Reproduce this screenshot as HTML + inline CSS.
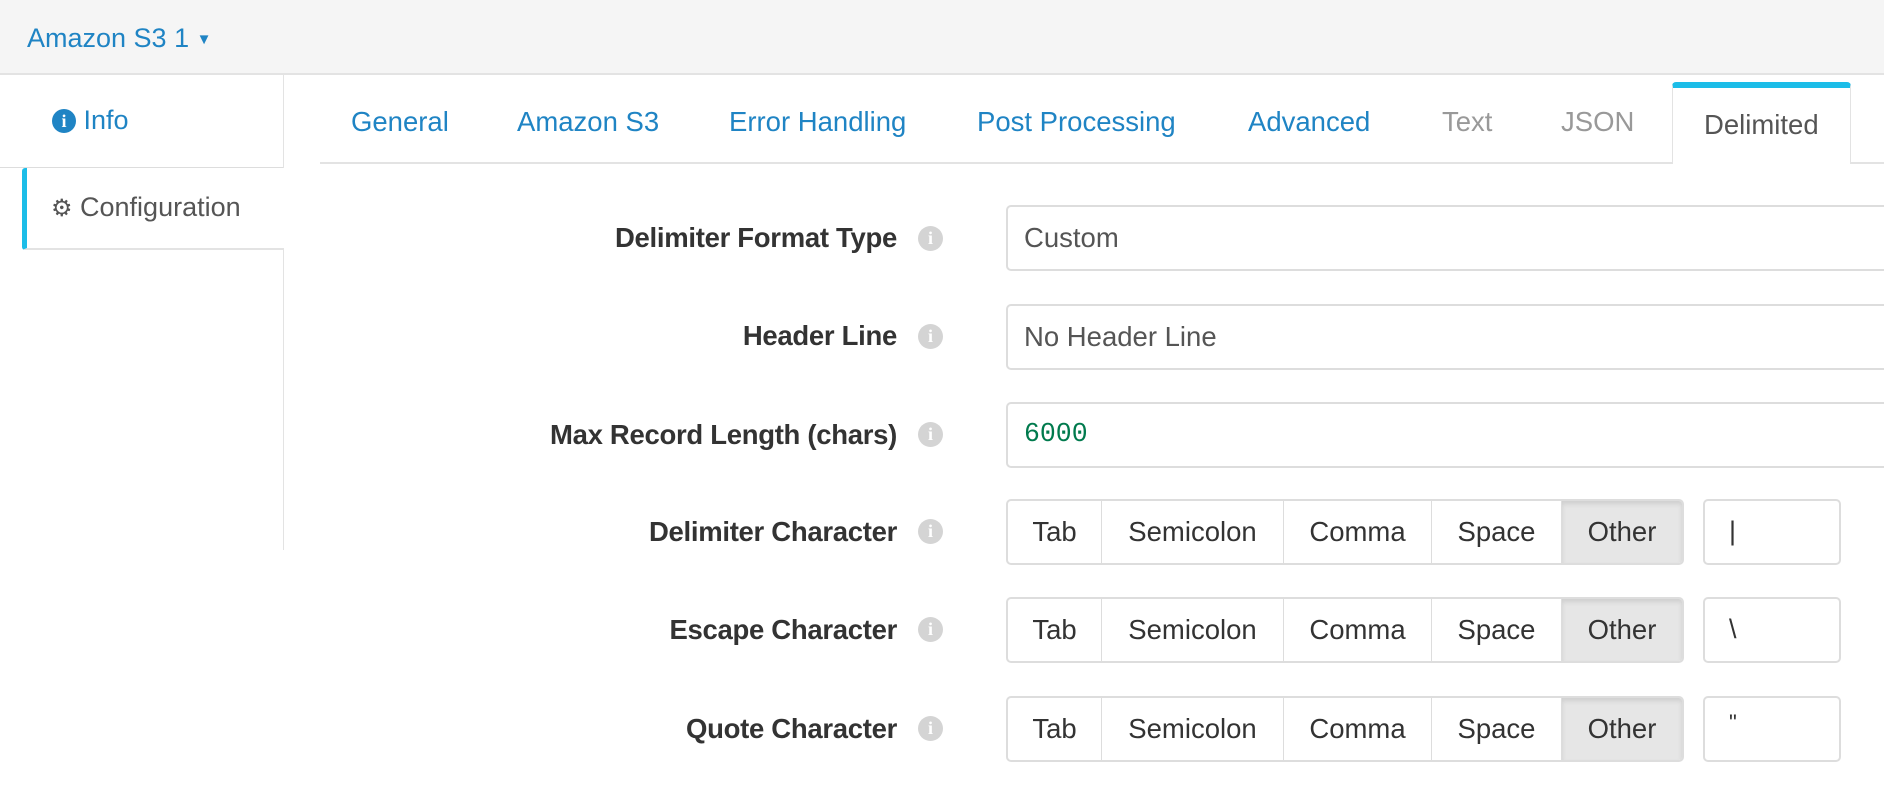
<!DOCTYPE html>
<html><head><meta charset="utf-8"><style>
*{box-sizing:border-box;margin:0;padding:0}
body{width:1884px;height:788px;overflow:hidden;background:#fff;font-family:"Liberation Sans",Arial,sans-serif;position:relative;color:#333}
.top{position:absolute;left:0;top:0;width:1884px;height:75px;background:#f5f5f5;border-bottom:2px solid #e3e3e3}
.top span{position:absolute;left:27px;top:23px;font-size:27px;color:#1f84c4}
.side{position:absolute;left:0;top:75px;width:284px;height:475px;border-right:1px solid #e3e3e3}
.info{position:absolute;left:0;top:0;width:283px;height:93px;border-bottom:1px solid #ddd;font-size:27px;color:#1f84c4;padding:30px 0 0 52px}
.conf{position:absolute;left:22px;top:93px;width:262px;height:82px;background:#fff;border-left:5px solid #1cbde8;border-bottom:2px solid #e3e3e3;font-size:27px;color:#555;padding:24px 0 0 24px;border-radius:3px 0 0 3px}
.tabs{position:absolute;left:320px;top:162px;width:1564px;border-top:2px solid #e3e3e3}
.tab{position:absolute;top:106px;font-size:27.5px;color:#1f84c4}
.act{position:absolute;left:1672px;top:82px;width:179px;height:82px;background:#fff;border:1px solid #e3e3e3;border-bottom:none;border-top:6px solid #1cbde8;border-radius:4px 4px 0 0;font-size:27.5px;color:#555;padding:21px 0 0 31px}
.lbl{position:absolute;right:987px;font-size:27.5px;font-weight:bold;color:#333;text-align:right;white-space:nowrap;letter-spacing:-0.3px}
.ic{position:absolute;left:918px;width:25px;height:25px;border-radius:50%;background:#d4d4d4;color:#fff;font:bold 18px "Liberation Serif",serif;text-align:center;line-height:25px}
.inp{position:absolute;left:1006px;width:900px;height:66px;border:2px solid #ddd;border-radius:5px;font-size:27.5px;color:#555;padding:15px 0 0 16px}
.grp{position:absolute;left:1006px;height:66px;display:flex;border:2px solid #ddd;border-radius:5px;overflow:hidden}
.grp div{height:100%;border-right:1px solid #ddd;font-size:27.5px;color:#333;text-align:center;line-height:62px}
.grp div:last-child{border-right:none;background:#e6e6e6;box-shadow:inset 0 3px 5px rgba(0,0,0,.1)}
.sm{position:absolute;left:1703px;width:138px;height:66px;border:2px solid #ddd;border-radius:5px;font-size:27px;padding:15px 0 0 24px}
</style></head><body>
<div class="top"><span>Amazon S3 1 <span style="position:static;font-size:15px;vertical-align:3px">▼</span></span></div>
<div class="side">
<div class="info"><span style="display:inline-block;width:24px;height:24px;border-radius:50%;background:#1f84c4;color:#fff;font:bold 18px 'Liberation Serif',serif;text-align:center;line-height:24px;vertical-align:2px">i</span> Info</div>
<div class="conf"><span style="color:#555;font-family:'DejaVu Sans';font-size:24px">⚙</span> Configuration</div>
</div>
<div class="tabs"></div>
<span class="tab" style="left:351px">General</span>
<span class="tab" style="left:517px">Amazon S3</span>
<span class="tab" style="left:729px">Error Handling</span>
<span class="tab" style="left:977px">Post Processing</span>
<span class="tab" style="left:1248px">Advanced</span>
<span class="tab" style="left:1442px;color:#999">Text</span>
<span class="tab" style="left:1561px;color:#999">JSON</span>
<div class="act">Delimited</div>

<div class="lbl" style="top:222px">Delimiter Format Type</div><div class="ic" style="top:226px">i</div>
<div class="inp" style="top:205px">Custom</div>
<div class="lbl" style="top:320px">Header Line</div><div class="ic" style="top:324px">i</div>
<div class="inp" style="top:304px">No Header Line</div>
<div class="lbl" style="top:419px">Max Record Length (chars)</div><div class="ic" style="top:422px">i</div>
<div class="inp" style="top:402px;color:#007a4d;font-family:'Liberation Mono',monospace;font-size:26.5px">6000</div>

<div class="lbl" style="top:516px">Delimiter Character</div><div class="ic" style="top:519px">i</div>
<div class="grp" style="top:499px"><div style="width:94px">Tab</div><div style="width:182px">Semicolon</div><div style="width:148px">Comma</div><div style="width:130px">Space</div><div style="width:120px">Other</div></div>
<div class="sm" style="top:499px">|</div>
<div class="lbl" style="top:614px">Escape Character</div><div class="ic" style="top:617px">i</div>
<div class="grp" style="top:597px"><div style="width:94px">Tab</div><div style="width:182px">Semicolon</div><div style="width:148px">Comma</div><div style="width:130px">Space</div><div style="width:120px">Other</div></div>
<div class="sm" style="top:597px">\</div>
<div class="lbl" style="top:713px">Quote Character</div><div class="ic" style="top:716px">i</div>
<div class="grp" style="top:696px"><div style="width:94px">Tab</div><div style="width:182px">Semicolon</div><div style="width:148px">Comma</div><div style="width:130px">Space</div><div style="width:120px">Other</div></div>
<div class="sm" style="top:696px;font-size:22px;padding-top:12px">"</div>
</body></html>
